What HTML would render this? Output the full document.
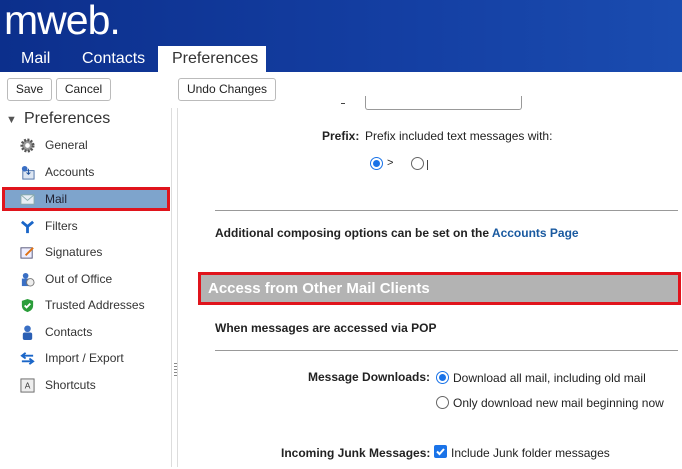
<!DOCTYPE html>
<html><head><meta charset="utf-8"><style>
*{margin:0;padding:0;box-sizing:border-box}
body{width:682px;height:469px;overflow:hidden;background:#fff;font-family:"Liberation Sans",sans-serif;color:#222;position:relative;font-size:12px}
.a{position:absolute;white-space:nowrap}
.hdr{left:0;top:0;width:682px;height:72px;background:linear-gradient(90deg,#0c2f8c,#143fa3 60%,#1a4cb0)}
.logo{left:4px;top:-3px;color:#fff;font-size:41px;letter-spacing:-1px}
.tab{top:50px;color:#fff;font-size:16px}
.btn{top:78px;height:23px;border:1px solid #bbb;border-radius:3px;background:#fff;font-size:12px;text-align:center;line-height:21px;color:#222}
.it{left:45px;font-size:12px;color:#333}
.ic{left:19px;width:17px;height:15px}
.b{font-weight:bold}
.hr{height:1px;background:#999}
.rad{width:13px;height:13px;border-radius:50%;border:1px solid #666;background:#fff}
.rad.on{border:1px solid #1a73e8}
.rad.on::after{content:"";position:absolute;left:2px;top:2px;width:7px;height:7px;border-radius:50%;background:#1a73e8}
</style></head><body>
<div class="a hdr"></div>
<div class="a logo">mweb.</div>
<div class="a tab" style="left:21px">Mail</div>
<div class="a tab" style="left:82px">Contacts</div>
<div class="a" style="left:158px;top:46px;width:108px;height:27px;background:#fff"></div>
<div class="a" style="left:172px;top:50px;font-size:16px;color:#333">Preferences</div>
<div class="a btn" style="left:7px;width:45px">Save</div>
<div class="a btn" style="left:56px;width:55px">Cancel</div>
<div class="a btn" style="left:178px;width:98px">Undo Changes</div>

<div class="a" style="left:171px;top:108px;width:1px;height:359px;background:#ddd"></div>
<div class="a" style="left:177px;top:108px;width:1px;height:359px;background:#ddd"></div>
<div class="a" style="left:174px;top:363px;width:3px;height:14px;background:repeating-linear-gradient(#888 0 1px,transparent 1px 3px)"></div>

<div class="a" style="left:6px;top:114px;font-size:11px;color:#555">▼</div>
<div class="a" style="left:24px;top:110px;font-size:16px;color:#333">Preferences</div>
<div class="a" style="left:2px;top:187px;width:168px;height:24px;background:#7ea4cc;border:3px solid #e0141c"></div>
<svg class="a ic" style="top:138px" viewBox="0 0 16 16"><circle cx="8" cy="8" r="6" fill="#999" stroke="#555" stroke-dasharray="2 1.5" stroke-width="3"/><circle cx="8" cy="8" r="2.5" fill="#fff"/></svg>
<div class="a it" style="top:138px">General</div>
<svg class="a ic" style="top:165px" viewBox="0 0 16 16"><rect x="3" y="6" width="12" height="9" fill="#dde6f2" stroke="#4a6fa5"/><circle cx="5" cy="4" r="3" fill="#3a6fc4"/><path d="M9 4v6M7 8l2 2 2-2" stroke="#1d4f9c" fill="none"/></svg>
<div class="a it" style="top:165px">Accounts</div>
<svg class="a ic" style="top:192px" viewBox="0 0 16 16"><rect x="1" y="3" width="14" height="10" fill="#e8eef5" stroke="#8aa"/><path d="M1 3l7 6 7-6" stroke="#8aa" fill="none"/></svg>
<div class="a it" style="top:192px;color:#223">Mail</div>
<svg class="a ic" style="top:219px" viewBox="0 0 16 16"><path d="M8 15V8L2 3M8 8l6-5" stroke="#1a66c8" stroke-width="3" fill="none"/></svg>
<div class="a it" style="top:219px">Filters</div>
<svg class="a ic" style="top:245px" viewBox="0 0 16 16"><rect x="1" y="3" width="12" height="11" fill="#eef" stroke="#557"/><path d="M6 11l8-8" stroke="#e07010" stroke-width="2"/></svg>
<div class="a it" style="top:245px">Signatures</div>
<svg class="a ic" style="top:272px" viewBox="0 0 16 16"><circle cx="6" cy="4" r="3" fill="#3a6fc4"/><rect x="2" y="7" width="8" height="8" fill="#3a6fc4"/><circle cx="11" cy="11" r="4" fill="#eee" stroke="#777"/></svg>
<div class="a it" style="top:272px">Out of Office</div>
<svg class="a ic" style="top:298px" viewBox="0 0 16 16"><path d="M8 1l6 2v5c0 4-3 6-6 7-3-1-6-3-6-7V3z" fill="#2a9d3a"/><path d="M5 8l2 2 4-4" stroke="#fff" stroke-width="2" fill="none"/></svg>
<div class="a it" style="top:298px">Trusted Addresses</div>
<svg class="a ic" style="top:325px" viewBox="0 0 16 16"><circle cx="8" cy="4" r="3.5" fill="#3a6fc4"/><rect x="3" y="8" width="10" height="8" rx="2" fill="#2a5fb4"/></svg>
<div class="a it" style="top:325px">Contacts</div>
<svg class="a ic" style="top:351px" viewBox="0 0 16 16"><path d="M14 5H3M6 2L2 5l4 3M2 11h11M10 8l4 3-4 3" stroke="#1a66c8" stroke-width="2" fill="none"/></svg>
<div class="a it" style="top:351px">Import / Export</div>
<svg class="a ic" style="top:378px" viewBox="0 0 16 16"><rect x="1" y="1" width="14" height="14" fill="#eee" stroke="#666"/><text x="5" y="11" font-size="9" fill="#333" font-family="Liberation Sans">A</text></svg>
<div class="a it" style="top:378px">Shortcuts</div>

<div class="a" style="left:365px;top:96px;width:157px;height:14px;border:1px solid #999;border-top:none;border-radius:0 0 3px 3px"></div>
<div class="a" style="left:341px;top:103px;width:4px;height:1px;background:#444"></div>
<div class="a b" style="left:322px;top:129px">Prefix:</div>
<div class="a" style="left:365px;top:129px">Prefix included text messages with:</div>
<div class="a rad on" style="left:370px;top:157px"></div>
<div class="a" style="left:387px;top:157px;font-size:11px">&gt;</div>
<div class="a rad" style="left:411px;top:157px"></div>
<div class="a" style="left:427px;top:160px;width:1px;height:10px;background:#444"></div>
<div class="a hr" style="left:215px;top:210px;width:463px"></div>
<div class="a b" style="left:215px;top:226px">Additional composing options can be set on the <span style="color:#1a5aa0">Accounts Page</span></div>
<div class="a" style="left:198px;top:272px;width:483px;height:33px;background:#b3b3b3;border:3px solid #e0141c"></div>
<div class="a b" style="left:208px;top:280px;font-size:15px;color:#fff">Access from Other Mail Clients</div>
<div class="a b" style="left:215px;top:321px">When messages are accessed via POP</div>
<div class="a hr" style="left:215px;top:350px;width:463px"></div>
<div class="a b" style="left:308px;top:370px">Message Downloads:</div>
<div class="a rad on" style="left:436px;top:371px"></div>
<div class="a" style="left:453px;top:371px">Download all mail, including old mail</div>
<div class="a rad" style="left:436px;top:396px"></div>
<div class="a" style="left:453px;top:396px">Only download new mail beginning now</div>
<div class="a b" style="left:281px;top:446px">Incoming Junk Messages:</div>
<div class="a" style="left:434px;top:445px;width:13px;height:13px;background:#1a73e8;border-radius:2px"></div>
<svg class="a" style="left:434px;top:445px" width="13" height="13"><path d="M3 6.5l2.5 2.5 4.5-5" stroke="#fff" stroke-width="2" fill="none"/></svg>
<div class="a" style="left:451px;top:446px">Include Junk folder messages</div>
</body></html>
